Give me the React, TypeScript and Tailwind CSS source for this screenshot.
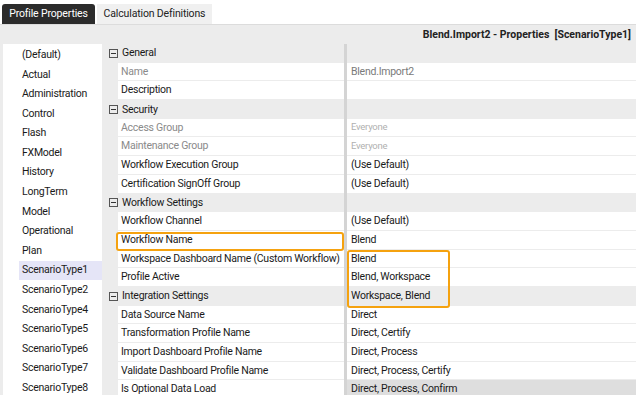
import React from 'react';

type Row =
  | { kind: 'cat'; label: string }
  | { kind: 'prop'; name: string; value: string; dimName?: boolean; dimValue?: 'mid' | 'light'; selected?: boolean };

const rows: Row[] = [
  { kind: 'cat', label: 'General' },
  { kind: 'prop', name: 'Name', value: 'Blend.Import2', dimName: true, dimValue: 'mid' },
  { kind: 'prop', name: 'Description', value: '' },
  { kind: 'cat', label: 'Security' },
  { kind: 'prop', name: 'Access Group', value: 'Everyone', dimName: true, dimValue: 'light' },
  { kind: 'prop', name: 'Maintenance Group', value: 'Everyone', dimName: true, dimValue: 'light' },
  { kind: 'prop', name: 'Workflow Execution Group', value: '(Use Default)' },
  { kind: 'prop', name: 'Certification SignOff Group', value: '(Use Default)' },
  { kind: 'cat', label: 'Workflow Settings' },
  { kind: 'prop', name: 'Workflow Channel', value: '(Use Default)' },
  { kind: 'prop', name: 'Workflow Name', value: 'Blend' },
  { kind: 'prop', name: 'Workspace Dashboard Name (Custom Workflow)', value: 'Blend' },
  { kind: 'prop', name: 'Profile Active', value: 'Blend, Workspace' },
  { kind: 'cat', label: 'Integration Settings' },
  { kind: 'prop', name: 'Data Source Name', value: 'Direct' },
  { kind: 'prop', name: 'Transformation Profile Name', value: 'Direct, Certify' },
  { kind: 'prop', name: 'Import Dashboard Profile Name', value: 'Direct, Process' },
  { kind: 'prop', name: 'Validate Dashboard Profile Name', value: 'Direct, Process, Certify' },
  { kind: 'prop', name: 'Is Optional Data Load', value: 'Direct, Process, Confirm', selected: true },
];

// the third highlighted value sits on the category row in the screenshot
const catValues: Record<string, string> = { 'Integration Settings': 'Workspace, Blend' };

const scenarios = [
  '(Default)', 'Actual', 'Administration', 'Control', 'Flash', 'FXModel', 'History', 'LongTerm', 'Model',
  'Operational', 'Plan', 'ScenarioType1', 'ScenarioType2', 'ScenarioType4', 'ScenarioType5', 'ScenarioType6',
  'ScenarioType7', 'ScenarioType8',
];

const CollapseIcon = () => (
  <svg width="9" height="9" viewBox="0 0 9 9" className="shrink-0">
    <rect x="0.5" y="0.5" width="8" height="8" fill="none" stroke="#555" />
    <line x1="2" y1="4.5" x2="7" y2="4.5" stroke="#333" />
  </svg>
);

export default function App() {
  return (
    <div
      className="w-[636px] h-[395px] overflow-hidden bg-white text-[10.5px] tracking-[-0.25px] text-[#1a1a1a] flex flex-col"
      style={{ fontFamily: 'Roboto, "Open Sans", sans-serif' }}
    >
      {/* tabs */}
      <div className="flex items-end gap-[2px] pl-[2px] pt-[2px] h-[24px] text-[10.5px] tracking-[-0.15px]">
        <div className="h-[20px] w-[93px] flex items-center justify-center rounded-t-[3px] bg-[#2b2b2b] text-white">Profile Properties</div>
        <div className="h-[20px] w-[115px] flex items-center justify-center bg-[#f0f0f0] text-[#222]">Calculation Definitions</div>
      </div>

      <div className="flex-1 flex flex-col bg-[#ececec] border-t border-[#dcdcdc] min-h-0">
        {/* header */}
        <div className="h-[19px] flex items-center justify-end pr-[5px] font-bold text-[#222] text-[10.5px] tracking-[0px]">
          Blend.Import2 - Properties&nbsp;&nbsp;[ScenarioType1]
        </div>

        <div className="flex-1 flex min-h-0 pl-[3px]">
          {/* scenario list */}
          <div className="w-[99px] bg-white flex flex-col pt-[1px]">
            {scenarios.map((s) => (
              <div key={s} className="h-[19.6px] shrink-0 flex pl-[16px]">
                <div className={`flex-1 flex items-center pl-[3px] ${s === 'ScenarioType1' ? 'bg-[#e5e5f7]' : ''}`}>{s}</div>
              </div>
            ))}
          </div>

          {/* property grid */}
          <div className="flex-1 ml-[4px] flex flex-col relative">
            {rows.map((r, i) =>
              r.kind === 'cat' ? (
                <div key={i} className="h-[18.7px] shrink-0 flex items-center bg-[#ececec]">
                  <div className="w-[241px] flex items-center gap-[4px] pl-[3px] border-r-[3px] border-[#d4d4d4] h-full">
                    <CollapseIcon />
                    <span>{r.label}</span>
                  </div>
                  <div className="flex-1 pl-[4px]">
                    {catValues[r.label] && <span>{catValues[r.label]}</span>}
                  </div>
                </div>
              ) : (
                <div key={i} className="h-[18.7px] shrink-0 flex bg-[#ececec]">
                  <div className="w-[241px] pl-[12px] flex border-r-[3px] border-[#d4d4d4]">
                    <div
                      className={`flex-1 bg-white flex items-center pl-[3px] border-b border-[#ececec] whitespace-nowrap overflow-hidden ${
                        r.dimName ? 'text-[#8a8a8a]' : ''
                      }`}
                    >
                      {r.name}
                    </div>
                  </div>
                  <div
                    className={`flex-1 flex items-center pl-[4px] border-b border-[#ececec] whitespace-nowrap ${r.selected ? 'bg-[#dedede]' : 'bg-white'} ${
                      r.dimValue === 'mid' ? 'text-[#7a7a7a]' : r.dimValue === 'light' ? 'text-[#b0b0b0] text-[9.5px]' : ''
                    }`}
                  >
                    {r.value}
                  </div>
                </div>
              )
            )}

            {/* highlight boxes */}
            <div className="absolute left-[10px] top-[188px] w-[228px] h-[19px] border-2 border-[#f5a20f] rounded-[3px]" />
            <div className="absolute left-[241px] top-[206px] w-[103px] h-[58px] border-2 border-[#f5a20f] rounded-[3px]" />
          </div>
        </div>
      </div>
    </div>
  );
}
